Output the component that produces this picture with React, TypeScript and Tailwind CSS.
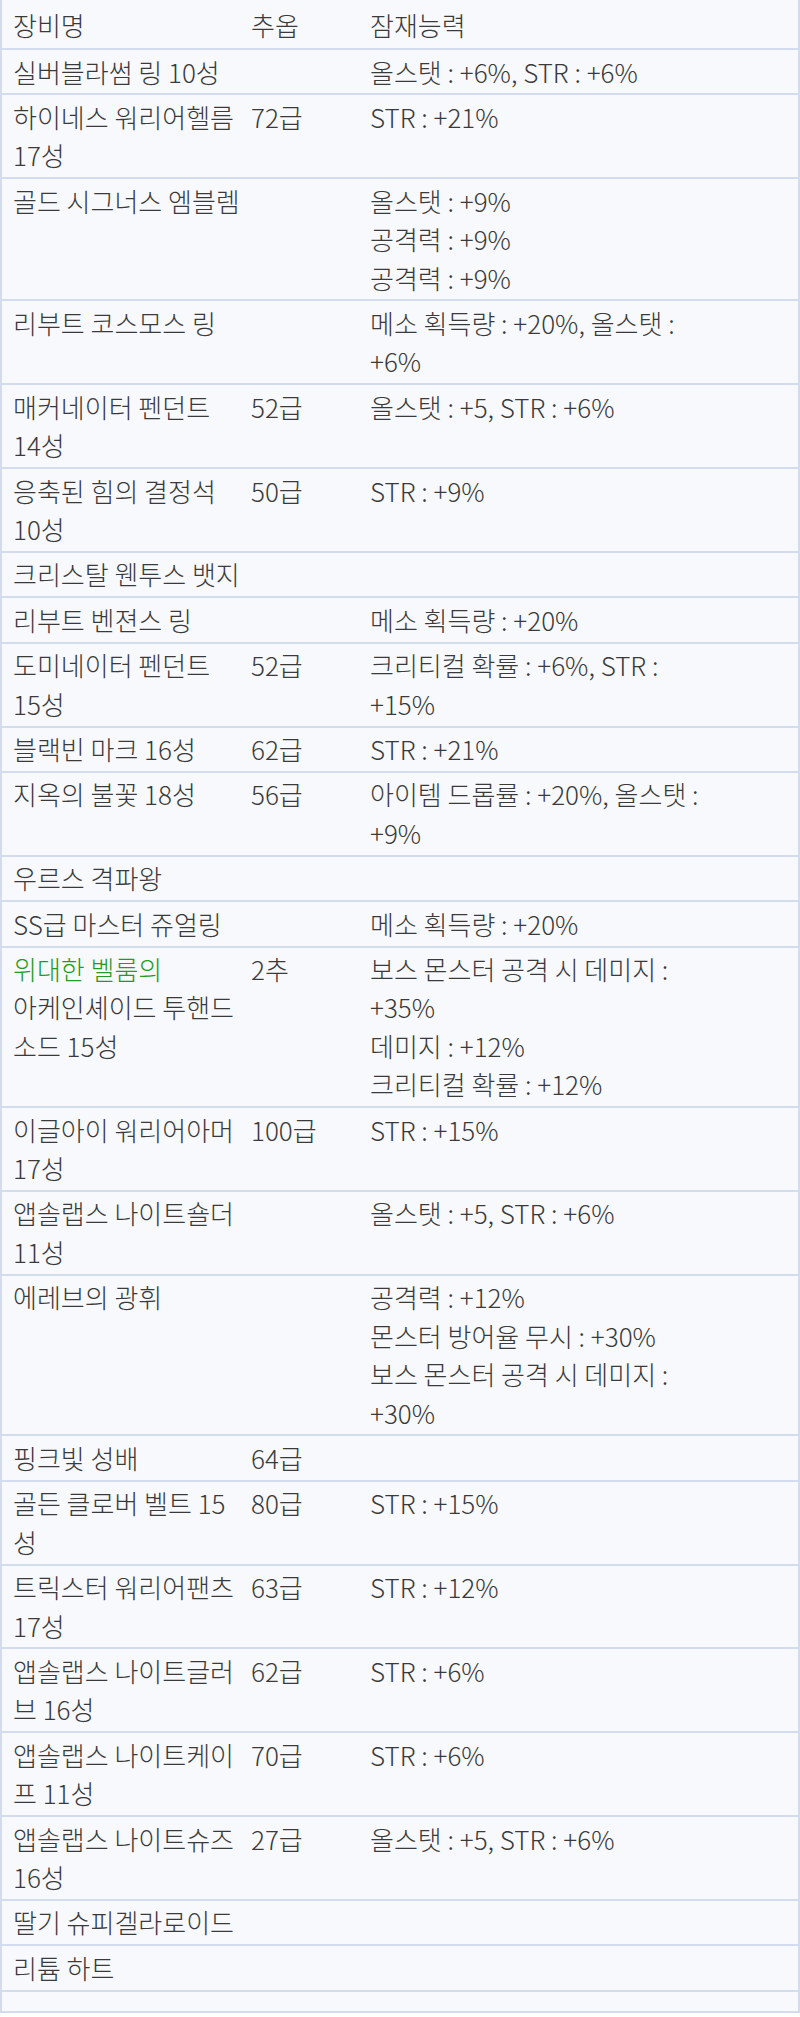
import React from 'react';

type Row = {
    name: string[];
    prefix?: string;
    grade: string;
    potentials: string[];
};

// lines are split by hand so the wrapping matches the original table
const rows: Row[] = [
    { name: ['실버블라썸 링 10성'], grade: '', potentials: ['올스탯 : +6%, STR : +6%'] },
    { name: ['하이네스 워리어헬름', '17성'], grade: '72급', potentials: ['STR : +21%'] },
    { name: ['골드 시그너스 엠블렘'], grade: '', potentials: ['올스탯 : +9%', '공격력 : +9%', '공격력 : +9%'] },
    { name: ['리부트 코스모스 링'], grade: '', potentials: ['메소 획득량 : +20%, 올스탯 :', '+6%'] },
    { name: ['매커네이터 펜던트', '14성'], grade: '52급', potentials: ['올스탯 : +5, STR : +6%'] },
    { name: ['응축된 힘의 결정석', '10성'], grade: '50급', potentials: ['STR : +9%'] },
    { name: ['크리스탈 웬투스 뱃지'], grade: '', potentials: [] },
    { name: ['리부트 벤젼스 링'], grade: '', potentials: ['메소 획득량 : +20%'] },
    { name: ['도미네이터 펜던트', '15성'], grade: '52급', potentials: ['크리티컬 확률 : +6%, STR :', '+15%'] },
    { name: ['블랙빈 마크 16성'], grade: '62급', potentials: ['STR : +21%'] },
    { name: ['지옥의 불꽃 18성'], grade: '56급', potentials: ['아이템 드롭률 : +20%, 올스탯 :', '+9%'] },
    { name: ['우르스 격파왕'], grade: '', potentials: [] },
    { name: ['SS급 마스터 쥬얼링'], grade: '', potentials: ['메소 획득량 : +20%'] },
    {
        name: ['아케인셰이드 투핸드', '소드 15성'],
        prefix: '위대한 벨룸의',
        grade: '2추',
        potentials: ['보스 몬스터 공격 시 데미지 :', '+35%', '데미지 : +12%', '크리티컬 확률 : +12%'],
    },
    { name: ['이글아이 워리어아머', '17성'], grade: '100급', potentials: ['STR : +15%'] },
    { name: ['앱솔랩스 나이트숄더', '11성'], grade: '', potentials: ['올스탯 : +5, STR : +6%'] },
    {
        name: ['에레브의 광휘'],
        grade: '',
        potentials: ['공격력 : +12%', '몬스터 방어율 무시 : +30%', '보스 몬스터 공격 시 데미지 :', '+30%'],
    },
    { name: ['핑크빛 성배'], grade: '64급', potentials: [] },
    { name: ['골든 클로버 벨트 15', '성'], grade: '80급', potentials: ['STR : +15%'] },
    { name: ['트릭스터 워리어팬츠', '17성'], grade: '63급', potentials: ['STR : +12%'] },
    { name: ['앱솔랩스 나이트글러', '브 16성'], grade: '62급', potentials: ['STR : +6%'] },
    { name: ['앱솔랩스 나이트케이', '프 11성'], grade: '70급', potentials: ['STR : +6%'] },
    { name: ['앱솔랩스 나이트슈즈', '16성'], grade: '27급', potentials: ['올스탯 : +5, STR : +6%'] },
    { name: ['딸기 슈피겔라로이드'], grade: '', potentials: [] },
    { name: ['리튬 하트'], grade: '', potentials: [] },
];

const rowClass = 'grid grid-cols-[246px_111px_1fr] border-b-2 border-[#d3dcec]';

const App = () => {
    return (
        <div
            className="w-[800px] bg-[#f7f9fd] text-[#3a3a3a] text-[26px] font-light leading-[38.4px] whitespace-nowrap"
            style={{ fontFamily: '"Noto Sans CJK KR", "Noto Sans", sans-serif' }}
        >
            <div className="border-x-2 border-[#d3dcec]">
                <div className={rowClass}>
                    <div className="pl-[11px] pt-[6px] pb-[3.6px]">장비명</div>
                    <div className="pl-[3px] pt-[6px] pb-[3.6px]">추옵</div>
                    <div className="pl-[11px] pt-[6px] pb-[3.6px]">잠재능력</div>
                </div>
                {rows.map((row, i) => (
                    <div key={i} className={rowClass}>
                        <div className="pl-[11px] py-[2.5px]">
                            {row.prefix && <div className="text-[#1f9c22]">{row.prefix}</div>}
                            {row.name.map((n, j) => (
                                <div key={j}>{n}</div>
                            ))}
                        </div>
                        <div className="pl-[3px] py-[2.5px]">{row.grade}</div>
                        <div className="pl-[11px] py-[2.5px]">
                            {row.potentials.map((p, j) => (
                                <div key={j}>{p}</div>
                            ))}
                        </div>
                    </div>
                ))}
                <div className={rowClass}>
                    <div className="h-[19px]"></div>
                    <div></div>
                    <div></div>
                </div>
            </div>
        </div>
    );
};

export default App;
